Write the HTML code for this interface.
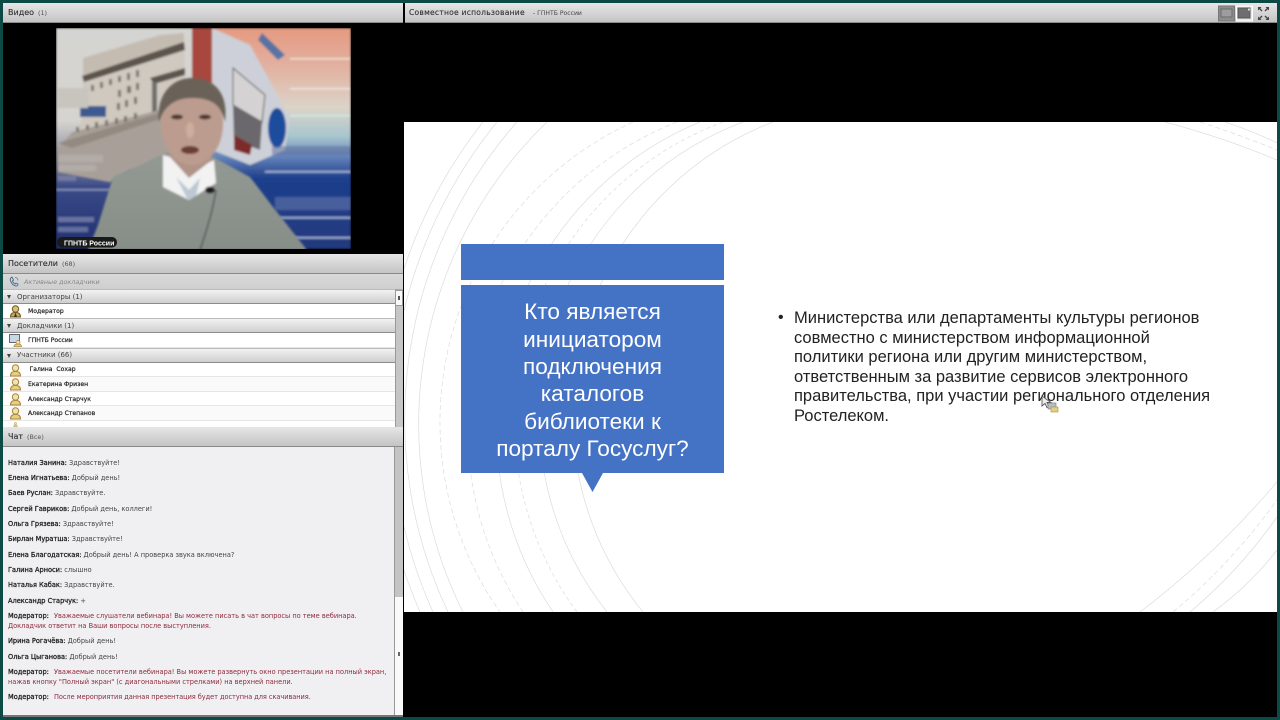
<!DOCTYPE html>
<html lang="ru"><head><meta charset="utf-8"><title>Вебинар</title>
<style>
*{box-sizing:border-box}
html,body{margin:0;padding:0;width:1280px;height:720px;overflow:hidden;background:#0b4a45}
body{position:relative;font-family:"DejaVu Sans","Liberation Sans",sans-serif;color:#222}
.a{position:absolute}
.t{position:absolute;white-space:nowrap;line-height:12px;height:12px;filter:blur(.25px)}
.hd{position:absolute;background:linear-gradient(#e6e6e6,#c4c4c4);border-bottom:1px solid #8a8a8a}
.grp{position:absolute;left:3px;width:392px;height:15px;background:linear-gradient(#f2f2f2,#cfcfcf);border-top:1px solid #bbb;border-bottom:1px solid #8c8c8c}
.row{position:absolute;left:3px;width:392px;height:14.6px;background:#fff;border-bottom:1px solid #e6e6e6}
.h{font-size:8px;color:#2c2c2c;-webkit-text-stroke:.1px #2c2c2c}
.n{font-size:6.4px;color:#555}
.g{font-size:7px;color:#444;left:17px}
.u{font-size:6.1px;color:#222;left:28px;-webkit-text-stroke:.2px #222}
.c{font-size:6.6px;color:#444;left:8px}
.c b{color:#222;font-weight:400;-webkit-text-stroke:.3px #222}
.m{color:#8e2a3c}
.tri{position:absolute;left:7px;width:0;height:0;border-left:2.5px solid transparent;border-right:2.5px solid transparent;border-top:4px solid #444}
.ic{position:absolute;left:9px;width:13px;height:13px}
.st{font-family:"Liberation Sans",sans-serif;position:absolute;white-space:nowrap}
.ti{color:#fff;font-size:22.6px;line-height:28px;height:28px;left:461px;width:263px;text-align:center}
.bd{color:#222;font-size:16.5px;line-height:20px;height:20px;left:794px}
</style></head><body>

<svg width="0" height="0" style="position:absolute"><defs>
<symbol id="usr" viewBox="0 0 13 13"><circle cx="6.5" cy="4" r="3.2" fill="#efe3b4" stroke="#a8863c" stroke-width="1"/><path d="M1.5 12c0-3.4 2-4.6 5-4.6s5 1.2 5 4.6z" fill="#e8cf7e" stroke="#a8863c" stroke-width="1"/></symbol>
<symbol id="mod" viewBox="0 0 13 13"><circle cx="6.5" cy="4" r="3.2" fill="#d8c078" stroke="#6e5a28" stroke-width="1"/><path d="M1.5 12c0-3.4 2-4.6 5-4.6s5 1.2 5 4.6z" fill="#c8a850" stroke="#6e5a28" stroke-width="1"/><path d="M6.500 7.500l-1.500 4.500h3z" fill="#333"/></symbol>
<filter id="bl"><feGaussianBlur stdDeviation="1"/></filter>
<linearGradient id="lft" x1="0" y1="0" x2="0" y2="1"><stop offset="0" stop-color="#d4d4d2"/><stop offset=".42" stop-color="#d6d4d0"/><stop offset=".6" stop-color="#8a8a9a"/><stop offset=".72" stop-color="#3a4a88"/><stop offset="1" stop-color="#1f2f70"/></linearGradient>
<linearGradient id="rgt" x1="0" y1="0" x2="0" y2="1"><stop offset="0" stop-color="#e59a80"/><stop offset=".17" stop-color="#e2b0a0"/><stop offset=".36" stop-color="#dcd4c8"/><stop offset=".49" stop-color="#a8c6cf"/><stop offset=".59" stop-color="#5f7eb6"/><stop offset=".68" stop-color="#1e3f8c"/><stop offset="1" stop-color="#223a7e"/></linearGradient>
<linearGradient id="swt" x1="0" y1="0" x2="0" y2="1"><stop offset="0" stop-color="#939a94"/><stop offset="1" stop-color="#878e88"/></linearGradient>
</defs></svg>

<!-- left column black backdrop -->
<div class="a" style="left:3px;top:3px;width:400px;height:714px;background:#000"></div>
<div class="a" style="left:403px;top:3px;width:874px;height:714px;background:#000"></div>

<!-- header video -->
<div class="hd" style="left:3px;top:3px;width:400px;height:20px"></div>
<div class="t h" style="left:8px;top:7px">Видео</div><div class="t n" style="left:38px;top:7px">(1)</div>

<!-- video -->
<svg class="a" style="left:56px;top:28px" width="295" height="221" viewBox="56 28 295 221">
<g filter="url(#bl)">
<rect x="56" y="28" width="140" height="221" fill="url(#lft)"/>
<rect x="196" y="28" width="155" height="221" fill="url(#rgt)"/>
<!-- building left -->
<polygon points="83,58 160,35 184,33 184,44 83,76" fill="#c4bcb0"/>
<polygon points="83,78 184,46 186,120 170,150 73,132 82,120" fill="#cfc9c0"/>
<polygon points="82,76 184,42 185,50 84,82" fill="#5c544e"/>
<polygon points="150,78 185,68 185,75 154,84" fill="#5c544e"/>
<polygon points="152,82 157,82 157,118 152,118" fill="#6e6e6c"/>
<polygon points="72,132 160,110 172,150 165,170 130,170 110,182 58,172 58,148" fill="#a8a098"/>
<rect x="80" y="106" width="26" height="11" fill="#3d5a90"/>
<rect x="58" y="88" width="30" height="20" fill="#c8c4be"/>
<g fill="#7d746c">
<rect x="91" y="85" width="3" height="6"/><rect x="100" y="82" width="3" height="6"/><rect x="109" y="79" width="3" height="6"/><rect x="118" y="76" width="3" height="6"/><rect x="127" y="73" width="3" height="7"/><rect x="136" y="70" width="3" height="7"/>
<rect x="118" y="90" width="3" height="7"/><rect x="127" y="86" width="4" height="7"/><rect x="136" y="83" width="3" height="7"/>
<rect x="117" y="103" width="3" height="7"/><rect x="125" y="100" width="3" height="7"/><rect x="134" y="97" width="3" height="7"/>
<rect x="76" y="127" width="3" height="5"/><rect x="86" y="125" width="3" height="5"/><rect x="95" y="122" width="3" height="6"/><rect x="105" y="120" width="3" height="6"/><rect x="115" y="118" width="3" height="6"/><rect x="124" y="116" width="3" height="6"/><rect x="134" y="113" width="3" height="6"/>
</g>
<polygon points="58,143 160,113 163,118 72,148" fill="#8d857c" opacity=".8"/>
<!-- red strip -->
<rect x="192" y="28" width="20" height="56" fill="#a8463e"/>
<!-- right building -->
<polygon points="212,28 250,45 290,118 285,150 250,165 212,150" fill="#cdd0d8"/>
<polygon points="233,68 265,95 262,122 233,105" fill="#d4d2d2" stroke="#4c4844" stroke-width="1"/>
<polygon points="233,105 262,122 260,150 234,140" fill="#6a686c"/>
<ellipse cx="277" cy="128" rx="9" ry="20" fill="#1f4e9c"/>
<polygon points="262,33 285,55 278,60 258,40" fill="#3466a8" opacity=".8"/>
<polygon points="234,135 252,145 250,155 234,150" fill="#7d2c2c"/>
<rect x="290" y="58" width="61" height="1.500" fill="#efe4d6"/><rect x="290" y="88" width="61" height="1.500" fill="#efe8e0"/><rect x="290" y="115" width="61" height="1.500" fill="#d8ecec"/>
<rect x="265" y="171" width="86" height="1.500" fill="#aebfdf"/><rect x="280" y="217" width="71" height="1.500" fill="#a8bade"/><rect x="285" y="237" width="66" height="1.500" fill="#a8bade"/>
<rect x="272" y="146" width="79" height="9" fill="#5c6c9c" opacity=".5"/>
<rect x="275" y="197" width="76" height="13" fill="#8594bc" opacity=".4"/>
<rect x="58" y="155" width="45" height="7" fill="#d0d0d8" opacity=".25"/><rect x="58" y="165" width="38" height="6" fill="#d0d0d8" opacity=".25"/><rect x="58" y="176" width="18" height="5" fill="#d0d0d8" opacity=".25"/>
<rect x="58" y="217" width="36" height="5" fill="#d6dcec" opacity=".35"/><rect x="58" y="227" width="30" height="5" fill="#d6dcec" opacity=".35"/>
<rect x="56" y="189" width="55" height="1.500" fill="#c8cede" opacity=".6"/>
</g>
<!-- man -->
<g filter="url(#bl)">
<polygon points="88,250 98,225 113,177 140,165 167,152 213,157 250,177 273,207 307,250" fill="url(#swt)"/>
<polygon points="170,140 210,140 212,165 190,195 168,165" fill="#b09488"/>
<polygon points="163,155 170,157 189,178 208,163 214,160 216,183 189,200 163,187" fill="#f2f2f2"/>
<polygon points="176,177 189,190 200,178 196,196 188,200" fill="#bcc8d4"/>
<path d="M216 190C212 215 205 235 200 250" stroke="#3c403c" stroke-width="1.2" fill="none"/>
<ellipse cx="210" cy="190" rx="5" ry="3.500" fill="#1c1c1c"/>
<ellipse cx="192" cy="124" rx="31" ry="41" fill="#bc9c8e"/>
<path d="M159 122c-3-26 12-44 33-44s37 14 33 44c-3-12-8-24-33-24-17 0-28 8-33 24z" fill="#6b6258"/>
<ellipse cx="177" cy="117" rx="6" ry="2.500" fill="#4e3830"/><ellipse cx="205" cy="117" rx="6" ry="2.500" fill="#4e3830"/>
<ellipse cx="190" cy="150" rx="9" ry="4" fill="#6a3c36"/>
<ellipse cx="190" cy="130" rx="4" ry="8" fill="#ccae9e"/>
</g>
<rect x="57" y="237" width="60" height="10.5" rx="5" fill="#1a1a1a"/>
<text x="64" y="245.4" font-family="Liberation Sans,sans-serif" font-size="7" font-weight="700" fill="#fff">ГПНТБ России</text>
</svg>

<!-- visitors -->
<div class="hd" style="left:3px;top:254px;width:400px;height:20px"></div>
<div class="t h" style="left:8px;top:258px">Посетители</div><div class="t n" style="left:62px;top:258px">(68)</div>
<div class="a" style="left:3px;top:274px;width:400px;height:16px;background:linear-gradient(#d9d9d9,#cfcfcf);border-bottom:1px solid #aaa"></div>
<svg class="a" style="left:9px;top:276px" width="11" height="12" viewBox="0 0 11 12"><path d="M3 1c-2 1-2 3-1 5s3 4 5 4 2-1 2-2l-2-1-1 1C5 8 4 6 3.500 5l1-1-1.500-3z" fill="#c8d4e0" stroke="#4a6a8a" stroke-width=".9"/><path d="M6 1.500c2 0 3 1.500 3 3" stroke="#4a6a8a" fill="none" stroke-width=".7"/></svg>
<div class="t" style="left:24px;top:276px;font-size:6.4px;color:#888;font-style:italic">Активные докладчики</div>

<div class="a" style="left:3px;top:290px;width:400px;height:137px;background:#fff"></div>
<div class="grp" style="top:289px"></div><div class="tri" style="top:295px"></div><div class="t g" style="top:291px">Организаторы (1)</div>
<div class="row" style="top:304px"></div><svg class="ic" style="top:305px"><use href="#mod"/></svg><div class="t u" style="top:306px">Модератор</div>
<div class="grp" style="top:318px"></div><div class="tri" style="top:324px"></div><div class="t g" style="top:320px">Докладчики (1)</div>
<div class="row" style="top:333px"></div><svg class="a" style="left:9px;top:334px" width="13" height="13" viewBox="0 0 13 13"><rect x=".5" y=".5" width="10" height="8" fill="#c8d8e4" stroke="#667"/><circle cx="9" cy="8.500" r="2" fill="#efe3b4" stroke="#a8863c" stroke-width=".7"/><path d="M5 12.500c0-2 2-2.500 4-2.500s3.500.5 3.500 2.500z" fill="#e8cf7e" stroke="#a8863c" stroke-width=".7"/></svg><div class="t u" style="top:335px">ГПНТБ России</div>
<div class="grp" style="top:347.500px"></div><div class="tri" style="top:353.500px"></div><div class="t g" style="top:349px">Участники (66)</div>
<div class="row" style="top:362.500px"></div><svg class="ic" style="top:363.500px"><use href="#usr"/></svg><div class="t u" style="top:364px;left:29.500px">Галина&nbsp; Сохар</div>
<div class="row" style="top:377px;background:#fafafa"></div><svg class="ic" style="top:378px"><use href="#usr"/></svg><div class="t u" style="top:379px">Екатерина Фризен</div>
<div class="row" style="top:391.600px"></div><svg class="ic" style="top:392.500px"><use href="#usr"/></svg><div class="t u" style="top:393.500px">Александр Старчук</div>
<div class="row" style="top:406.200px;background:#fafafa"></div><svg class="ic" style="top:407px"><use href="#usr"/></svg><div class="t u" style="top:408px">Александр Степанов</div>
<svg class="ic" style="top:421.500px;height:5px"><use href="#usr"/></svg>
<!-- list scrollbar -->
<div class="a" style="left:395px;top:290px;width:8px;height:137px;background:#c6c6c6;border-left:1px solid #999"></div>
<div class="a" style="left:395px;top:290px;width:8px;height:16px;background:#f8f8f8;border:1px solid #999"></div>
<div class="a" style="left:398px;top:296px;width:2px;height:4px;background:#555"></div>

<!-- chat -->
<div class="hd" style="left:3px;top:427px;width:400px;height:20px"></div>
<div class="t h" style="left:8px;top:431px">Чат</div><div class="t n" style="left:27px;top:431px">(Все)</div>
<div class="a" style="left:3px;top:447px;width:392px;height:268px;background:#f0f0f2"></div>
<div class="a" style="left:394px;top:447px;width:9px;height:150px;background:#c4c4c4;border-left:1px solid #999"></div>
<div class="a" style="left:394px;top:597px;width:9px;height:118px;background:#fafafa;border-left:1px solid #999"></div>
<div class="a" style="left:397.500px;top:652px;width:2px;height:4px;background:#666"></div>
<div class="a" style="left:3px;top:715px;width:400px;height:2px;background:#777"></div>

<div class="t c" style="top:457px"><b>Наталия Занина:</b> Здравствуйте!</div>
<div class="t c" style="top:472px"><b>Елена Игнатьева:</b> Добрый день!</div>
<div class="t c" style="top:487px"><b>Баев Руслан:</b> Здравствуйте.</div>
<div class="t c" style="top:503px"><b>Сергей Гавриков:</b> Добрый день, коллеги!</div>
<div class="t c" style="top:518px"><b>Ольга Грязева:</b> Здравствуйте!</div>
<div class="t c" style="top:533px"><b>Бирлан Муратша:</b> Здравствуйте!</div>
<div class="t c" style="top:549px"><b>Елена Благодатская:</b> Добрый день! А проверка звука включена?</div>
<div class="t c" style="top:564px"><b>Галина Арноси:</b> слышно</div>
<div class="t c" style="top:579px"><b>Наталья Кабак:</b> Здравствуйте.</div>
<div class="t c" style="top:595px"><b>Александр Старчук:</b> +</div>
<div class="t c" style="top:610px"><b style="margin-right:3px">Модератор:</b> <span class="m">Уважаемые слушатели вебинара! Вы можете писать в чат вопросы по теме вебинара.</span></div>
<div class="t c m" style="top:620px;color:#8e2a3c">Докладчик ответит на Ваши вопросы после выступления.</div>
<div class="t c" style="top:635px"><b>Ирина Рогачёва:</b> Добрый день!</div>
<div class="t c" style="top:651px"><b>Ольга Цыганова:</b> Добрый день!</div>
<div class="t c" style="top:666px"><b style="margin-right:3px">Модератор:</b> <span class="m">Уважаемые посетители вебинара! Вы можете развернуть окно презентации на полный экран,</span></div>
<div class="t c" style="top:676px;color:#8e2a3c">нажав кнопку "Полный экран" (с диагональными стрелками) на верхней панели.</div>
<div class="t c" style="top:691px"><b style="margin-right:3px">Модератор:</b> <span class="m" style="letter-spacing:-.05px">После мероприятия данная презентация будет доступна для скачивания.</span></div>

<!-- right header -->
<div class="hd" style="left:405px;top:3px;width:872px;height:20px"></div>
<div class="t h" style="left:409px;top:7px;font-size:7.6px;letter-spacing:.22px">Совместное использование</div>
<div class="t" style="left:533px;top:7.500px;font-size:6.100px;color:#444">- ГПНТБ России</div>
<svg class="a" style="left:1218px;top:5px" width="54" height="17" viewBox="0 0 54 17">
<rect x="0.500" y="1" width="16" height="15" fill="#8d8d8d" stroke="#777"/><rect x="3" y="4" width="11" height="8" fill="#9d9d9d" stroke="#6a6a6a"/>
<rect x="18.500" y="1" width="16" height="15" fill="#e8e8e8" stroke="#fff"/><rect x="20" y="3" width="12" height="10" fill="#6e6e6e" stroke="#555"/><rect x="30" y="3.500" width="2" height="2" fill="#ddd"/>
<g fill="none" stroke="#444" stroke-width="1.400"><path d="M41 3l3 3M50 3l-3 3M41 14l3-3M50 14l-3-3"/></g>
<g fill="#444"><path d="M40 2h3.500L40 5.500zM51 2h-3.500L51 5.500zM40 15h3.500L40 11.500zM51 15h-3.500L51 11.500z"/></g>
</svg>

<!-- slide -->
<div class="a" style="left:404px;top:122px;width:873px;height:490px;background:#fff;overflow:hidden">
<svg class="a" style="left:-404px;top:-122px" width="1280" height="720" viewBox="0 0 1280 720">
<g fill="none" stroke="#dcdcdc" stroke-width=".7">
<path d="M483 122A480 480 0 0 0 420 612"/>
<path d="M497 122A470 470 0 0 0 433 612"/>
<path d="M517 122A450 450 0 0 0 448 612"/>
<path d="M547 122A420 420 0 0 0 463 612"/>
<path d="M633 122A330 330 0 0 0 500 612" stroke-dasharray="5 3"/>
<path d="M677 122A330 330 0 0 0 523 612" stroke-dasharray="5 3"/>
<path d="M700 122A330 330 0 0 0 553 612"/>
<path d="M723 122A320 320 0 0 0 577 612" stroke-dasharray="4 3"/>
<path d="M743 122A315 315 0 0 0 607 612"/>
<path d="M773 122A313 313 0 0 0 643 612"/>
<path d="M1165 122Q1225 138 1277 160"/>
<path d="M1200 122Q1240 135 1277 150" stroke-dasharray="5 3"/>
<path d="M1225 122Q1255 132 1277 143"/>
<path d="M1140 612Q1215 555 1277 482"/>
<path d="M1173 612Q1230 565 1277 500" stroke-dasharray="5 3"/>
<path d="M1190 612Q1240 570 1277 517"/>
<path d="M1213 612Q1250 585 1277 550"/>
</g></svg>
</div>
<div class="a" style="left:461px;top:244px;width:263px;height:36px;background:#4472c4"></div>
<div class="a" style="left:461px;top:285px;width:263px;height:188px;background:#4472c4"></div>
<svg class="a" style="left:582px;top:473px" width="21" height="20"><polygon points="0,0 21,0 10.500,19" fill="#4472c4"/></svg>
<div class="st ti" style="top:298px">Кто является</div>
<div class="st ti" style="top:326px">инициатором</div>
<div class="st ti" style="top:353px">подключения</div>
<div class="st ti" style="top:380px">каталогов</div>
<div class="st ti" style="top:408px">библиотеки к</div>
<div class="st ti" style="top:435px">порталу Госуслуг?</div>

<div class="st" style="left:778px;top:308px;font-size:16px;line-height:20px;color:#222">•</div>
<div class="st bd" style="top:308px">Министерства или департаменты культуры регионов</div>
<div class="st bd" style="top:328px">совместно с министерством информационной</div>
<div class="st bd" style="top:347px">политики региона или другим министерством,</div>
<div class="st bd" style="top:367px">ответственным за развитие сервисов электронного</div>
<div class="st bd" style="top:386px">правительства, при участии регионального отделения</div>
<div class="st bd" style="top:406px">Ростелеком.</div>

<svg class="a" style="left:1040px;top:394px" width="20" height="20" viewBox="0 0 20 20"><path d="M2 2v10l3-2.500 2 4 2-1-2-4h4z" fill="#eee" stroke="#555" stroke-width=".9"/><rect x="8" y="9" width="8" height="6" fill="#b8bcc4" stroke="#777" stroke-width=".6"/><rect x="11" y="13" width="7" height="5" fill="#e4cf80" stroke="#a8903c" stroke-width=".6"/></svg>
</body></html>
